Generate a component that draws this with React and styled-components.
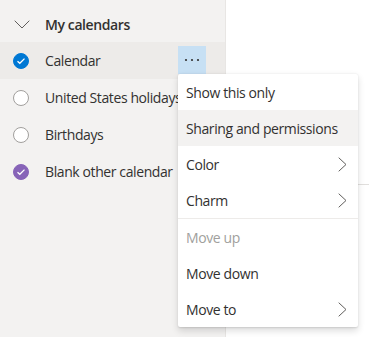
import React from "react";
import styled, { createGlobalStyle } from "styled-components";

const Global = createGlobalStyle`
  html, body { margin: 0; padding: 0; background: #ffffff; }
  body { font-family: "Open Sans", "Noto Sans", "Liberation Sans", sans-serif; color: #323130; }
  * { box-sizing: border-box; }
`;

const Page = styled.div`
  display: flex;
  width: 369px;
  height: 337px;
  overflow: hidden;
  position: relative;
`;

const Sidebar = styled.nav`
  width: 226px;
  flex: none;
  background: #f3f2f1;
  border-right: 1px solid #e8e6e4;
  padding-top: 6px;
  display: flex;
  flex-direction: column;
`;

const Main = styled.main`
  flex: 1;
  background: #fff;
`;

const MainTop = styled.div`
  height: 185px;
  border-bottom: 1px solid #e1dfdd;
`;

const GroupHeader = styled.div`
  height: 36px;
  display: flex;
  align-items: center;
  padding-left: 14px;
  gap: 15px;
  font-size: 14px;
  font-weight: 600;
  letter-spacing: -0.4px;
  color: #323130;
`;

const Row = styled.div`
  position: relative;
  height: 37px;
  display: flex;
  align-items: center;
  padding-left: 13px;
  gap: 16px;
  font-size: 14px;
  letter-spacing: -0.4px;
  color: #323130;
  background: ${(p) => (p.$selected ? "#edebe9" : "transparent")};
  white-space: nowrap;
`;

const Circle = styled.span`
  width: 16px;
  height: 16px;
  flex: none;
  border-radius: 50%;
  display: flex;
  align-items: center;
  justify-content: center;
  background: ${(p) => p.$color || "#ffffff"};
  border: 1px solid ${(p) => p.$color || "#a19f9d"};
`;

const MoreButton = styled.button`
  position: absolute;
  left: 178px;
  top: 4px;
  width: 28px;
  height: 28px;
  border: none;
  padding: 0;
  background: #c7e0f4;
  display: flex;
  align-items: center;
  justify-content: center;
`;

const Menu = styled.div`
  position: absolute;
  left: 178px;
  top: 32px;
  width: 180px;
  background: #fff;
  border-radius: 2px;
  box-shadow: 0 3.2px 7.2px rgba(0, 0, 0, 0.132), 0 0.6px 1.8px rgba(0, 0, 0, 0.108);
  display: flex;
  flex-direction: column;
  z-index: 10;
  letter-spacing: -0.4px;
`;

const MenuItem = styled.div`
  height: 36px;
  display: flex;
  align-items: center;
  justify-content: space-between;
  padding: 0 11px 0 8px;
  font-size: 14px;
  color: ${(p) => (p.$disabled ? "#a19f9d" : "#323130")};
  background: ${(p) => (p.$hover ? "#f3f2f1" : "transparent")};
`;

const Divider = styled.div`
  height: 1px;
  background: #edebe9;
`;

const Check = () => (
  <svg width="10" height="8" viewBox="0 0 10 8">
    <path d="M1.5 4.2 L3.8 6.3 L8.5 1.6" fill="none" stroke="#fff" strokeWidth="1.3" />
  </svg>
);

const ChevronDown = () => (
  <svg width="16" height="9" viewBox="0 0 16 9">
    <path d="M0.7 0.7 L8 8 L15.3 0.7" fill="none" stroke="#605e5c" strokeWidth="1" />
  </svg>
);

const ChevronRight = () => (
  <svg width="9" height="15" viewBox="0 0 9 15">
    <path d="M0.7 0.7 L8 7.5 L0.7 14.3" fill="none" stroke="#605e5c" strokeWidth="1" />
  </svg>
);

const Dots = () => (
  <svg width="16" height="4" viewBox="0 0 16 4">
    <circle cx="2" cy="2" r="1.1" fill="#323130" />
    <circle cx="8" cy="2" r="1.1" fill="#323130" />
    <circle cx="14" cy="2" r="1.1" fill="#323130" />
  </svg>
);

const menuItems = [
  { label: "Show this only" },
  { label: "Sharing and permissions", hover: true },
  { label: "Color", sub: true },
  { label: "Charm", sub: true, divider: true },
  { label: "Move up", disabled: true },
  { label: "Move down" },
  { label: "Move to", sub: true },
];

export default function App() {
  return (
    <>
      <Global />
      <Page>
        <Sidebar>
          <GroupHeader>
            <ChevronDown />
            <span>My calendars</span>
          </GroupHeader>
          <Row $selected>
            <Circle $color="#0078d4"><Check /></Circle>
            <span>Calendar</span>
            <MoreButton aria-label="More options"><Dots /></MoreButton>
            <Menu>
              {menuItems.map((m) => (
                <React.Fragment key={m.label}>
                  <MenuItem $hover={m.hover} $disabled={m.disabled}>
                    <span>{m.label}</span>
                    {m.sub && <ChevronRight />}
                  </MenuItem>
                  {m.divider && <Divider />}
                </React.Fragment>
              ))}
            </Menu>
          </Row>
          <Row>
            <Circle />
            <span>United States holidays</span>
          </Row>
          <Row>
            <Circle />
            <span>Birthdays</span>
          </Row>
          <Row>
            <Circle $color="#8764b8"><Check /></Circle>
            <span>Blank other calendar</span>
          </Row>
        </Sidebar>
        <Main>
          <MainTop />
        </Main>
      </Page>
    </>
  );
}
